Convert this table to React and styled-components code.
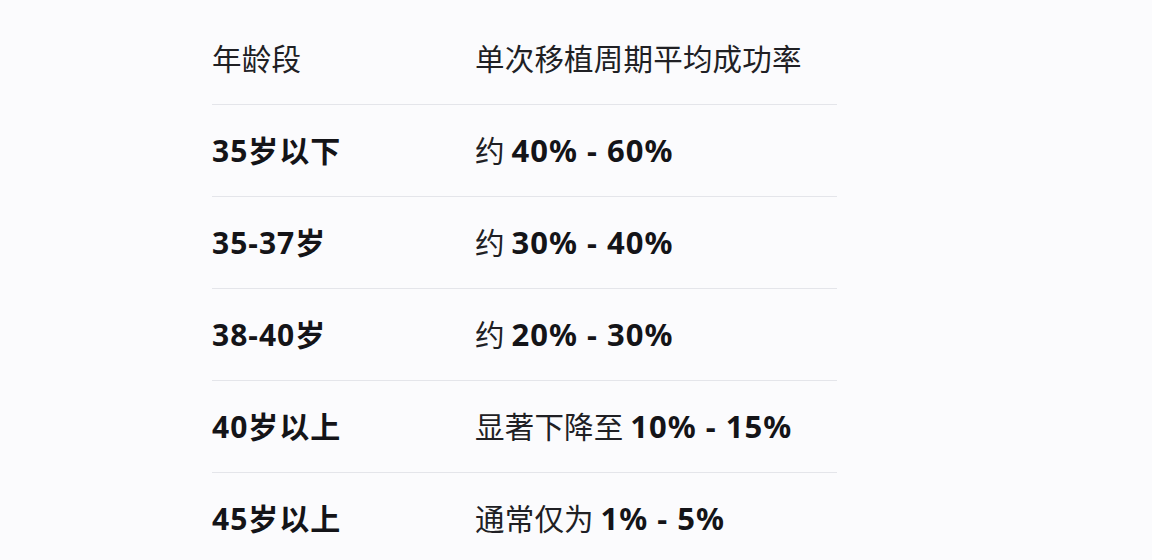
import styled, { createGlobalStyle } from "styled-components";

const GlobalStyle = createGlobalStyle`
  html, body {
    margin: 0;
    padding: 0;
    background: #fbfbfd;
  }
  body {
    font-family: "Noto Sans", "Noto Sans CJK SC", sans-serif;
    color: #1a1a1f;
  }
`;

export const Page = styled.div`
  width: 1152px;
  height: 560px;
  overflow: hidden;
  box-sizing: border-box;
  padding: 12px 0 0 212px;
  background: #fbfbfd;
`;

export const Table = styled.div`
  display: flex;
  flex-direction: column;
  width: 625px;
`;

export const Row = styled.div`
  display: grid;
  grid-template-columns: 263px 1fr;
  align-items: center;
  height: 92px;
  box-sizing: border-box;
  border-top: ${(p) => (p.$head ? "none" : "1px solid #e4e5ea")};
`;

export const HeadCell = styled.div`
  font-family: "Noto Sans CJK SC", sans-serif;
  font-size: 29.5px;
  font-weight: 400;
  color: #202024;
  line-height: 1;
  letter-spacing: 0.2px;
  white-space: nowrap;
`;

export const AgeCell = styled.div`
  font-family: "Noto Sans", "Noto Sans CJK SC", sans-serif;
  font-size: 30px;
  font-weight: 700;
  line-height: 1;
  letter-spacing: 1px;
  color: #141418;
  white-space: nowrap;
`;

export const RateCell = styled.div`
  font-family: "Noto Sans CJK SC", sans-serif;
  font-size: 29.5px;
  font-weight: 400;
  line-height: 1;
  color: #202024;
  letter-spacing: 0.2px;
  white-space: nowrap;
`;

export const Num = styled.b`
  font-family: "Noto Sans", sans-serif;
  font-size: 31px;
  font-weight: 700;
  letter-spacing: 1px;
  color: #141418;
`;

const rows = [
  { age: "35岁以下", pre: "约 ", num: "40% - 60%" },
  { age: "35-37岁", pre: "约 ", num: "30% - 40%" },
  { age: "38-40岁", pre: "约 ", num: "20% - 30%" },
  { age: "40岁以上", pre: "显著下降至 ", num: "10% - 15%" },
  { age: "45岁以上", pre: "通常仅为 ", num: "1% - 5%" },
];

const App = () => {
  return (
    <>
      <GlobalStyle />
      <Page>
        <Table>
          <Row $head>
            <HeadCell>年龄段</HeadCell>
            <HeadCell>单次移植周期平均成功率</HeadCell>
          </Row>
          {rows.map((r) => (
            <Row key={r.age}>
              <AgeCell>{r.age}</AgeCell>
              <RateCell>
                {r.pre}
                <Num>{r.num}</Num>
              </RateCell>
            </Row>
          ))}
        </Table>
      </Page>
    </>
  );
};

export default App;
